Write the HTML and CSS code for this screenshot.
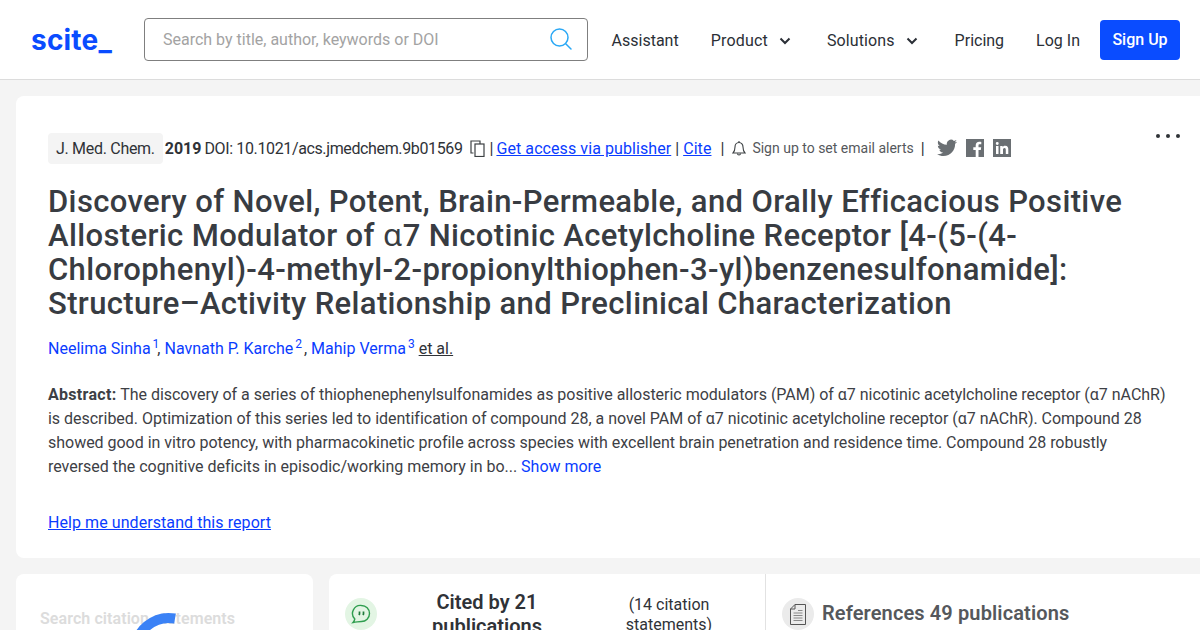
FILE: index.html
```html
<!DOCTYPE html>
<html lang="en">
<head>
<meta charset="utf-8">
<title>scite</title>
<link rel="stylesheet" href="styles.css">
</head>
<body>
<header class="topbar">
  <a class="logo">scite_</a>
  <div class="search">
    <span class="search-text">Search by title, author, keywords or DOI</span>
    <svg class="search-icon" width="24" height="24" viewBox="0 0 24 24" fill="none" stroke="#2aa8f5" stroke-width="1.500" stroke-linecap="round"><circle cx="10.500" cy="10.500" r="8.500"/><path d="M17 17l5 5"/></svg>
  </div>
  <nav class="nav">
    <a class="nav-item">Assistant</a>
    <a class="nav-item nav-menu nav-product">Product<svg class="chev" width="12" height="8" viewBox="0 0 12 8" fill="none" stroke="#2b2f36" stroke-width="2"><path d="M1.500 1.500L6 6l4.500-4.500"/></svg></a>
    <a class="nav-item nav-menu">Solutions<svg class="chev" width="12" height="8" viewBox="0 0 12 8" fill="none" stroke="#2b2f36" stroke-width="2"><path d="M1.500 1.500L6 6l4.500-4.500"/></svg></a>
    <a class="nav-item">Pricing</a>
    <a class="nav-item">Log In</a>
    <a class="signup">Sign Up</a>
  </nav>
</header>
<main class="page">
  <section class="card report">
    <div class="meta">
      <span class="journal">J. Med. Chem.</span>
      <b class="year">2019</b>
      <span class="doi">DOI: 10.1021/acs.jmedchem.9b01569</span>
      <svg class="copy" width="17" height="17" viewBox="0 0 17 17" fill="none" stroke="#3c4043" stroke-width="1.200"><path d="M3.500 13H1V1h9v3"/><rect x="5" y="4" width="9" height="12.500"/></svg>
      <span class="sep sep-copy">|</span>
      <a class="link">Get access via publisher</a>
      <span class="sep">|</span>
      <a class="link">Cite</a>
      <span class="sep sep-wide">|</span>
      <svg class="bell" width="14" height="17" viewBox="0 0 14 17" fill="none" stroke="#3c4043" stroke-width="1.100"><path d="M1 13h12c-1.500-1.500-2-3-2-6 0-2.500-1.500-4.500-4-4.500S3 4.500 3 7c0 3-.5 4.500-2 6z"/><path d="M7 1v1.500M5.500 13.500c0 2 3 2 3 0"/></svg>
      <span class="alerts">Sign up to set email alerts</span>
      <span class="sep sep-alert">|</span>
      <svg class="social" width="20" height="18" viewBox="0 0 24 20" fill="#6a6f73"><path d="M24 2.400c-.9.400-1.800.7-2.800.8 1-.6 1.800-1.600 2.200-2.700-1 .6-2 1-3.100 1.200A4.900 4.900 0 0 0 11.900 6.200C7.800 6 4.200 4 1.700.9c-1.300 2.200-.7 5.100 1.500 6.600-.8 0-1.600-.2-2.200-.6 0 2.300 1.600 4.500 4 5-.7.200-1.500.2-2.200.1.600 2 2.500 3.400 4.600 3.400-2.100 1.600-4.600 2.300-7.300 2 2.200 1.400 4.900 2.200 7.600 2.200 9.100 0 14.300-7.700 14-14.700 1-.7 1.800-1.500 2.300-2.500z"/></svg>
      <svg class="social" width="18" height="18" viewBox="0 0 18 18"><rect width="18" height="18" fill="#6a6f73"/><path fill="#fff" d="M12.500 18v-7h2.300l.4-2.700h-2.700V6.600c0-.8.200-1.300 1.300-1.300h1.500V2.900c-.3 0-1.100-.1-2.100-.1-2.100 0-3.500 1.300-3.500 3.600v1.900H7.300V11h2.400v7z"/></svg>
      <svg class="social" width="18" height="18" viewBox="0 0 18 18"><rect width="18" height="18" fill="#6a6f73"/><path fill="#fff" d="M3 7h2.500v8H3zM4.250 3a1.450 1.450 0 1 1 0 2.900 1.450 1.450 0 0 1 0-2.900zM7.200 7h2.400v1.100c.4-.7 1.300-1.300 2.600-1.300 2.600 0 3.100 1.700 3.100 3.900V15h-2.500v-3.800c0-.9 0-2.100-1.300-2.100s-1.500 1-1.500 2V15H7.200z"/></svg>
    </div>
    <span class="more"><i></i><i></i><i></i></span>
    <h1 class="title">Discovery of Novel, Potent, Brain-Permeable, and Orally Efficacious Positive Allosteric Modulator of <span class="alpha">α</span>7 Nicotinic Acetylcholine Receptor [4-(5-(4-Chlorophenyl)-4-methyl-2-propionylthiophen-3-yl)benzenesulfonamide]: Structure–Activity Relationship and Preclinical Characterization</h1>
    <p class="authors"><a class="author">Neelima Sinha<sup>1</sup></a>, <a class="author">Navnath P. Karche<sup>2</sup></a>, <a class="author">Mahip Verma<sup>3</sup></a> <a class="etal">et al.</a></p>
    <p class="abstract"><b>Abstract:</b> The discovery of a series of thiophenephenylsulfonamides as positive allosteric modulators (PAM) of α7 nicotinic acetylcholine receptor (α7 nAChR) is described. Optimization of this series led to identification of compound 28, a novel PAM of α7 nicotinic acetylcholine receptor (α7 nAChR). Compound 28 showed good in vitro potency, with pharmacokinetic profile across species with excellent brain penetration and residence time. Compound 28 robustly reversed the cognitive deficits in episodic/working memory in bo... <a class="showmore">Show more</a></p>
    <a class="link help">Help me understand this report</a>
  </section>
  <div class="lower">
    <aside class="card side">
      <span class="side-label">Search citation statements</span>
      <svg class="spinner" width="80" height="80" viewBox="0 0 80 80" fill="none"><path d="M6 40A34 34 0 0 1 46 6.500" stroke="#3b82f6" stroke-width="10"/></svg>
    </aside>
    <section class="card stats">
      <div class="cited">
        <span class="badge badge-green"><svg width="20" height="20" viewBox="0 0 20 20" fill="none" stroke="#2f9e4f" stroke-width="1.400"><path d="M10.500 1.500a8 8 0 0 1 0 16c-2.500 0-4 .5-8.500 1 1-1 1.500-2 1.800-3.500A8 8 0 0 1 10.500 1.500z"/><path stroke="#1f7a3a" stroke-width="1.700" d="M8.500 7.500v2.500l-.5 1M12.500 7.500v2.500l-.5 1"/></svg></span>
        <h2 class="cited-title">Cited by 21 publications</h2>
        <span class="cited-note">(14 citation statements)</span>
      </div>
      <div class="refs">
        <span class="badge badge-gray"><svg width="16" height="21" viewBox="0 0 16 21" fill="none" stroke="#555" stroke-width="1"><path d="M5 .5h10.500v20H.5V5zM5 .5V5H.5"/><path stroke="#8a8a8a" stroke-width="1.200" d="M3.500 9h9M3.500 11.500h9M3.500 14h9M3.500 16.500h9M8 6.500h4.500"/></svg></span>
        <h2 class="refs-title">References 49 publications</h2>
      </div>
    </section>
  </div>
</main>
</body>
</html>
```
FILE: styles.css
```css
* { box-sizing: border-box; }
html, body { margin: 0; height: 630px; overflow: hidden; }
body { background: #f4f4f4; font-family: Roboto, "Liberation Sans", sans-serif; color: #2f3237; }
a { cursor: pointer; }

.topbar { display: flex; align-items: center; height: 80px; background: #fff; border-bottom: 1px solid #dcdcdc; padding: 0 20px 0 31px; }
.logo { width: 113px; font-family: Inter, sans-serif; font-size: 28px; font-weight: 700; letter-spacing: .2px; color: #0a4cff; }
.search { display: flex; align-items: center; justify-content: space-between; width: 444px; height: 43px; margin-bottom: 1px; padding: 0 14px 0 18px; border: 1px solid #7f7f7f; border-radius: 4px; }
.search-text { font-size: 16px; color: #a3a3a3; }
.nav { display: flex; align-items: center; flex: 1; justify-content: flex-end; gap: 32px; font-size: 16px; }
.nav-item { display: flex; align-items: center; gap: 11px; padding-top: 2px; color: #2b2f36; }
.nav-menu { margin-right: 5px; letter-spacing: .1px; }
.nav-product { margin-right: 4px; letter-spacing: .2px; }
.signup { display: flex; align-items: center; justify-content: center; width: 80px; height: 40px; margin-left: -12px; background: #0a4cff; border-radius: 4px; color: #fff; font-weight: 500; }

.page { display: flex; flex-direction: column; gap: 16px; padding: 16px 0 0 16px; }
.card { background: #fff; border-radius: 8px 0 0 8px; }
.report { position: relative; height: 462px; padding: 37px 32px 0; }
.meta { display: flex; align-items: center; height: 31px; font-size: 16px; white-space: nowrap; }
.journal { display: flex; align-items: center; height: 31px; padding: 0 8px; margin-right: 2px; background: #f4f4f4; border-radius: 4px; letter-spacing: -.3px; }
.year { margin-right: 3px; }
.doi { letter-spacing: -.37px; }
.copy { margin: 0 0 0 7px; }
.sep { margin: 0 4px; }
.sep-copy { margin: 0 3px; }
.sep-wide { margin: 0 8px 0 9px; }
.sep-alert { margin: 0 12px 0 7px; }
.link { color: #0a3cff; text-decoration: underline; letter-spacing: .08px; }
.bell { margin-right: 6px; }
.alerts { margin-bottom: 1px; font-size: 14px; color: #55585c; }
.social { margin: 0 9px 2px 0; }
.more { position: absolute; top: 38px; right: 20px; display: flex; gap: 6px; }
.more i { width: 4px; height: 4px; border-radius: 50%; background: #2f3237; }
.title { margin: 21px 0 0; font-size: 31px; line-height: 34px; font-weight: 550; letter-spacing: .37px; color: #383c42; }
.alpha { font-family: "Noto Sans", sans-serif; font-weight: 400; line-height: 0; }
.authors { margin: 16px 0 0; font-size: 16px; line-height: 24px; }
.author { color: #0a3cff; }
.author:first-child { margin-right: -2px; }
.author:nth-child(2) { margin-right: 2px; }
.author sup { font-size: 12px; line-height: 0; margin-left: 2px; }
.etal { text-decoration: underline; }
.abstract { margin: 22px 0 0; font-size: 16px; line-height: 24px; letter-spacing: -.02px; color: #3d4045; }
.abstract b { letter-spacing: .3px; }
.showmore { color: #0a3cff; }
.help { display: block; margin-top: 32px; font-size: 16px; line-height: 24px; letter-spacing: .07px; }

.lower { display: flex; gap: 16px; }
.side { position: relative; width: 297px; height: 120px; border-radius: 8px; padding: 35px 24px; }
.side-label { font-size: 16px; font-weight: 600; letter-spacing: .08px; color: #dcdcdc; }
.spinner { position: absolute; top: 38px; left: 113px; }
.stats { display: flex; flex: 1; height: 120px; }
.cited { display: flex; width: 437px; padding: 16px 16px 0; border-right: 1px solid #e2e2e2; }
.badge { display: flex; flex: none; align-items: center; justify-content: center; width: 32px; height: 32px; border-radius: 50%; margin-top: 8px; }
.badge-green { background: #e3f5e4; }
.badge-gray { background: #ebebeb; }
.cited-title { width: 180px; margin: 0 0 0 20px; font-size: 20px; line-height: 24px; font-weight: 600; text-align: center; }
.cited-note { width: 130px; margin: 5px 0 0 27px; font-size: 16px; line-height: 20px; text-align: center; }
.refs { display: flex; padding: 16px; gap: 8px; }
.refs-title { margin: 10px 0 0; font-size: 20px; line-height: 26px; font-weight: 600; letter-spacing: .12px; color: #55585c; }
```
